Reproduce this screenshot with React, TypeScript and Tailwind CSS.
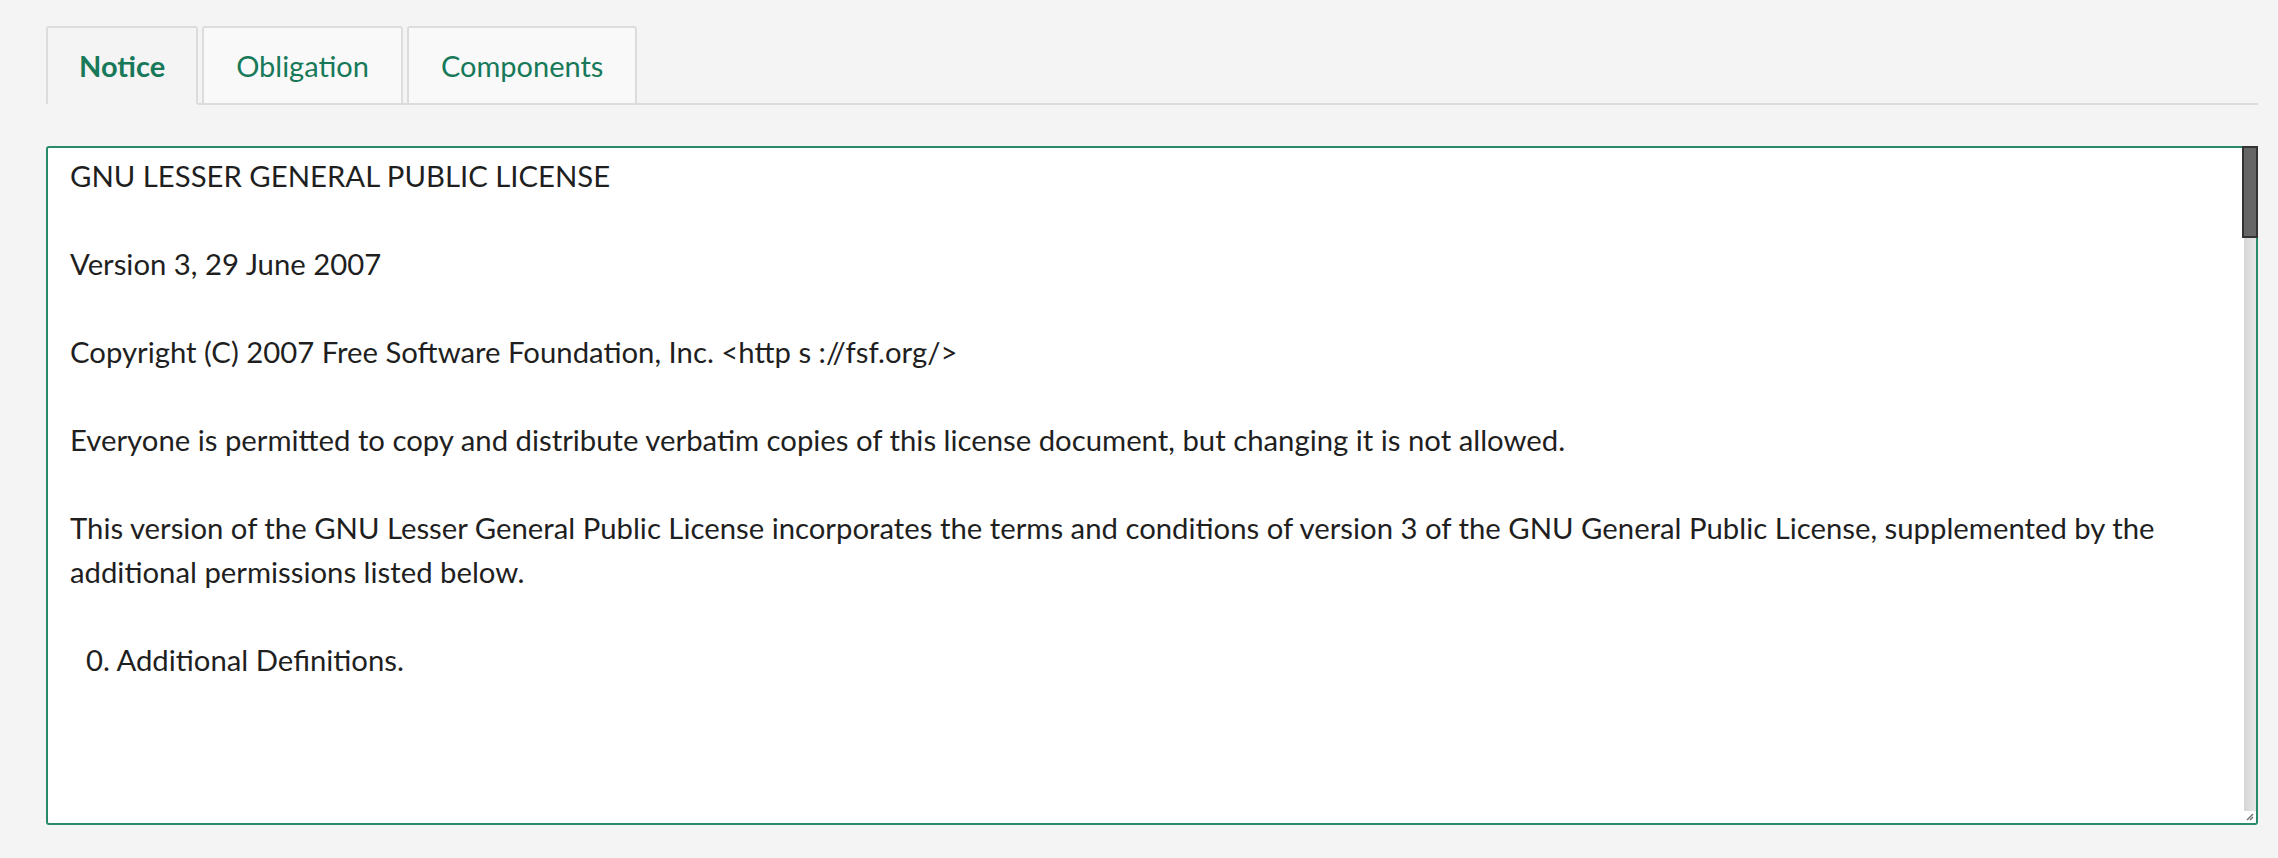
import { useState } from 'react';

const tabs = ['Notice', 'Obligation', 'Components'];

const noticeLines = [
  'GNU LESSER GENERAL PUBLIC LICENSE',
  '',
  'Version 3, 29 June 2007',
  '',
  'Copyright (C) 2007 Free Software Foundation, Inc. <http s ://fsf.org/>',
  '',
  'Everyone is permitted to copy and distribute verbatim copies of this license document, but changing it is not allowed.',
  '',
  'This version of the GNU Lesser General Public License incorporates the terms and conditions of version 3 of the GNU General Public License, supplemented by the',
  'additional permissions listed below.',
  '',
];

export default function App() {
  const [active, setActive] = useState('Notice');

  return (
    <div className="min-h-screen bg-[#f4f4f4] pl-[46px] pr-[20px] pt-[26px] pb-[32px] font-['Lato',sans-serif]">
      {/* Tabs */}
      <div className="flex gap-[4px] border-b-2 border-[#dcdcdc]">
        {tabs.map((tab) => (
          <button
            key={tab}
            onClick={() => setActive(tab)}
            className={`-mb-[2px] h-[79px] rounded-t-[3px] border-2 text-[29px] text-[#17795a] ${
              active === tab
                ? 'px-[31px] bg-[#f4f4f4] border-[#dcdcdc] border-b-[#f4f4f4] font-bold'
                : 'px-[32px] bg-[#f9f9f9] border-[#dcdcdc] font-normal'
            }`}
          >
            {tab}
          </button>
        ))}
      </div>

      {/* Notice text box */}
      <div className="mt-[41px] h-[679px] flex rounded-[3px] border-2 border-[#288a6b] bg-white">
        <div className="flex-1 overflow-hidden pl-[22px] pt-[6px] text-[29.3px] leading-[44px] text-[#1f1f1f]">
          {noticeLines.map((line, i) =>
            line === '' ? (
              <div key={i} className="h-[44px]" />
            ) : (
              <div key={i} className="whitespace-pre">
                {line}
              </div>
            )
          )}
          <div className="pl-[16px]">0. Additional Definitions.</div>
        </div>

        {/* Scrollbar */}
        <div className="w-[12px] flex flex-col">
          <div className="-mt-[2px] -mx-[2px] h-[92px] border-2 border-[#333] bg-[#666]" />
          <div className="flex-1 bg-gradient-to-r from-[#d6d6d6] to-[#e6e6e6]" />
          <div className="h-[12px] bg-white flex items-center justify-center">
            <svg width="8" height="8" viewBox="0 0 8 8">
              <path d="M1 7 L7 1 M4 7 L7 4" stroke="#777" strokeWidth="1.5" fill="none" />
            </svg>
          </div>
        </div>
      </div>
    </div>
  );
}
